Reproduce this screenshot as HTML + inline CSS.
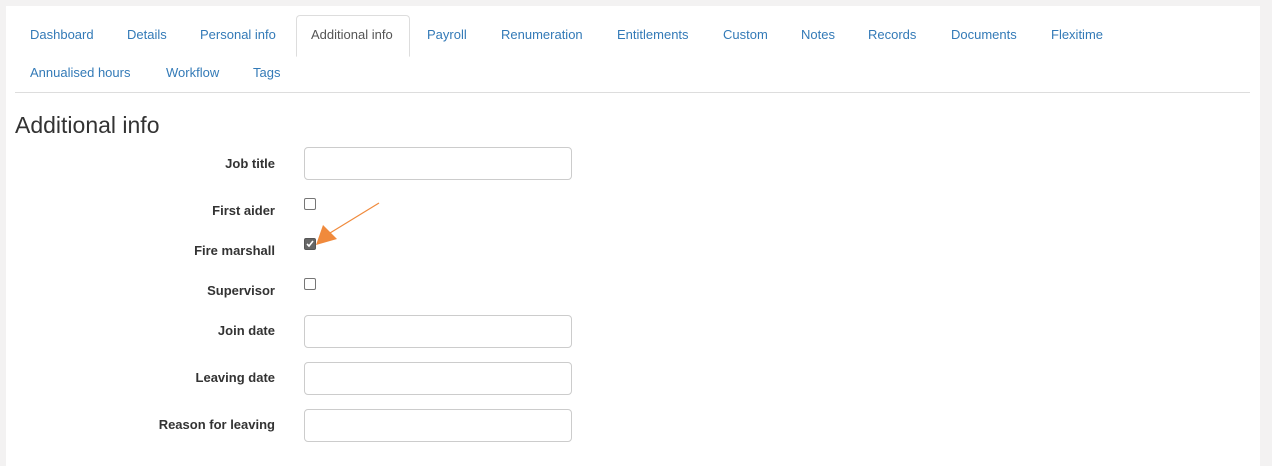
<!DOCTYPE html>
<html><head><style>
body{margin:0;width:1272px;height:452px;background:#f3f2f2;font-family:"Liberation Sans",sans-serif;position:relative;overflow:hidden}
.panel{position:absolute;left:6px;top:6px;width:1254px;height:460px;background:#fff}
.t{position:absolute;font-size:13px;color:#337ab7;line-height:16px}
.act{position:absolute;left:296px;top:15px;width:112px;height:40px;border:1px solid #ddd;border-bottom:1px solid #fff;border-radius:4px 4px 0 0;background:#fff}
.line{position:absolute;left:15px;top:92px;width:1235px;height:1px;background:#ddd}
h1{position:absolute;left:15px;top:112px;margin:0;font-weight:normal;font-size:23px;color:#333}
.l{position:absolute;right:997px;font-size:13px;font-weight:bold;color:#333;text-align:right;white-space:nowrap}
.in{position:absolute;left:304px;width:266px;height:31px;border:1px solid #ccc;border-radius:4px;background:#fff}
.cb{position:absolute;left:304px;width:10px;height:10px;border:1px solid #767676;border-radius:2px;background:#fff}
</style></head><body>
<div class="panel"></div>
<div class="act"></div>
<div class="t" style="left:30px;top:27px">Dashboard</div>
<div class="t" style="left:127px;top:27px">Details</div>
<div class="t" style="left:200px;top:27px">Personal info</div>
<div class="t" style="left:311px;top:27px;color:#555">Additional info</div>
<div class="t" style="left:427px;top:27px">Payroll</div>
<div class="t" style="left:501px;top:27px">Renumeration</div>
<div class="t" style="left:617px;top:27px">Entitlements</div>
<div class="t" style="left:723px;top:27px">Custom</div>
<div class="t" style="left:801px;top:27px">Notes</div>
<div class="t" style="left:868px;top:27px">Records</div>
<div class="t" style="left:951px;top:27px">Documents</div>
<div class="t" style="left:1051px;top:27px">Flexitime</div>
<div class="t" style="left:30px;top:65px">Annualised hours</div>
<div class="t" style="left:166px;top:65px">Workflow</div>
<div class="t" style="left:253px;top:65px">Tags</div>
<div class="line"></div>
<h1>Additional info</h1>
<div class="l" style="top:156px">Job title</div><div class="in" style="top:147px"></div>
<div class="l" style="top:203px">First aider</div><div class="cb" style="top:198px"></div>
<div class="l" style="top:243px">Fire marshall</div>
<div class="cb" style="top:238px;background:#666;border-color:#555"><svg width="10" height="10" style="position:absolute;left:0;top:0"><path d="M2 5l2 2 4-5" stroke="#fff" stroke-width="1.6" fill="none"/></svg></div>
<div class="l" style="top:283px">Supervisor</div><div class="cb" style="top:278px"></div>
<div class="l" style="top:323px">Join date</div><div class="in" style="top:315px"></div>
<div class="l" style="top:370px">Leaving date</div><div class="in" style="top:362px"></div>
<div class="l" style="top:417px">Reason for leaving</div><div class="in" style="top:409px"></div>
<svg style="position:absolute;left:0;top:0" width="1272" height="452"><line x1="379" y1="203" x2="330" y2="233" stroke="#f08a3c" stroke-width="1.2"/><polygon points="316,245 323,225 337,239" fill="#f08a3c"/></svg>
</body></html>
